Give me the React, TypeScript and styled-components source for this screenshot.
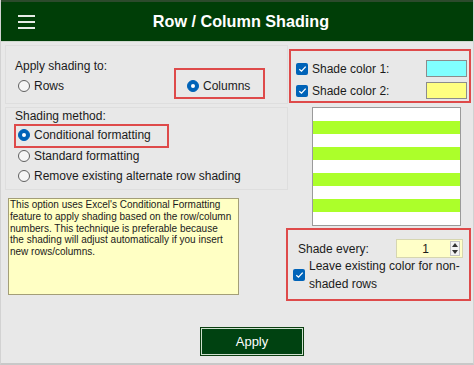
import styled, { createGlobalStyle } from "styled-components";

const GlobalStyle = createGlobalStyle`
  html, body {
    margin: 0;
    padding: 0;
    background: #e8e8e8;
  }
  body {
    font-family: "Liberation Sans", Arial, sans-serif;
    font-size: 12px;
    color: #1b1b1b;
  }
`;

const Page = styled.div`
  width: 474px;
  height: 365px;
  box-sizing: border-box;
  background: #e8e8e8;
  border-left: 1px solid #d2d2d2;
  border-right: 1px solid #d2d2d2;
  border-bottom: 2px solid #c8c8c8;
  overflow: hidden;
`;

const Header = styled.header`
  height: 42px;
  box-sizing: border-box;
  margin: 0 -1px;
  border-top: 2px solid #2c4a2c;
  border-bottom: 1px solid #cfd8cf;
  background: #003e07;
  display: flex;
  align-items: center;
`;

const Burger = styled.button`
  width: 17px;
  height: 14px;
  margin-left: 18px;
  padding: 0;
  border: 0;
  background: transparent;
  display: flex;
  flex-direction: column;
  justify-content: space-between;
  span {
    display: block;
    height: 2px;
    background: #e6ebe6;
  }
`;

const Title = styled.h1`
  flex: 1;
  margin: 0 0 0 -35px;
  padding-left: 8px;
  text-align: center;
  font-size: 16.2px;
  font-weight: bold;
  color: #ffffff;
`;

const Body = styled.main`
  display: flex;
  padding: 3px 0 0 4px;
`;

const LeftCol = styled.div`
  width: 281px;
  display: flex;
  flex-direction: column;
`;

const RightCol = styled.div`
  width: 185px;
  display: flex;
  flex-direction: column;
`;

const Group = styled.fieldset<{ $top: number; $height: number }>`
  margin: 0 0 3px 0;
  padding: ${(p) => p.$top}px 0 0 0;
  width: 283px;
  height: ${(p) => p.$height}px;
  box-sizing: border-box;
  border: 1px solid #dedede;
  min-width: 0;
`;

const Legend = styled.div`
  line-height: 16px;
  padding-left: 9px;
  font-size: 12px;
`;

const RadioRow = styled.div`
  display: flex;
  align-items: flex-start;
  margin-top: -6px;
  padding-left: 12px;
`;

const Highlight = styled.div<{ $pad: string; $width?: number }>`
  border: 2px solid #de4a4a;
  padding: ${(p) => p.$pad};
  width: ${(p) => (p.$width ? `${p.$width}px` : "auto")};
  box-sizing: border-box;
`;

const OptionLabel = styled.label<{ $width?: number; $mt?: number; $indent?: number }>`
  display: flex;
  align-items: center;
  gap: 4px;
  height: 16px;
  width: ${(p) => (p.$width ? `${p.$width}px` : "auto")};
  margin-top: ${(p) => p.$mt ?? 0}px;
  padding-left: ${(p) => p.$indent ?? 0}px;
  font-size: 12px;
  white-space: nowrap;
`;

const RadioDot = styled.span<{ $on?: boolean }>`
  width: 12px;
  height: 12px;
  box-sizing: border-box;
  border-radius: 50%;
  flex: none;
  position: relative;
  background: ${(p) => (p.$on ? "#0063b8" : "#f6f6f6")};
  border: 1px solid ${(p) => (p.$on ? "#0063b8" : "#606060")};
  &::after {
    content: "";
    display: ${(p) => (p.$on ? "block" : "none")};
    position: absolute;
    width: 4px;
    height: 4px;
    left: 3px;
    top: 3px;
    border-radius: 50%;
    background: #ffffff;
  }
`;

const MethodList = styled.div`
  padding-left: 8px;
  display: flex;
  flex-direction: column;
`;

const Info = styled.div`
  margin: 5px 0 0 3px;
  width: 231px;
  height: 97px;
  box-sizing: border-box;
  background: #ffffc4;
  border: 1px solid #a39e78;
  padding: 0 0 0 1px;
  font-size: 10px;
  line-height: 11.8px;
  color: #1a1a1a;
  white-space: nowrap;
`;

const ColorRow = styled.div`
  display: flex;
  align-items: center;
  height: 17px;
  & + & {
    margin-top: 5px;
  }
`;

const CheckBox = styled.span`
  width: 12px;
  height: 12px;
  border-radius: 2px;
  background: #0063b8;
  flex: none;
  display: flex;
  align-items: center;
  justify-content: center;
`;

const RowText = styled.span`
  margin-left: 4px;
  flex: 1;
`;

const Swatch = styled.span<{ $color: string }>`
  width: 41px;
  height: 17px;
  box-sizing: border-box;
  border: 1px solid #8c8c8c;
  background: ${(p) => p.$color};
`;

const Preview = styled.div`
  margin: 4px 0 0 26px;
  width: 149px;
  height: 119px;
  box-sizing: border-box;
  border: 1px solid #9a9a9a;
  display: flex;
  flex-direction: column;
`;

const Stripe = styled.div<{ $on: boolean }>`
  height: 13px;
  background: ${(p) => (p.$on ? "#acff2a" : "#ffffff")};
`;

const EveryRow = styled.div`
  display: flex;
  align-items: center;
  height: 19px;
  padding-left: 8px;
`;

const Spin = styled.div`
  margin-left: auto;
  margin-right: 6px;
  width: 67px;
  height: 19px;
  box-sizing: border-box;
  background: #ffffc8;
  border: 1px solid #d6d6b0;
  display: flex;
  align-items: center;
`;

const SpinValue = styled.span`
  flex: 1;
  text-align: center;
  font-size: 12px;
  padding-left: 4px;
`;

const SpinArrows = styled.span`
  width: 10px;
  height: 15px;
  margin-right: 2px;
  box-sizing: border-box;
  border: 1px solid #c4c4c4;
  background: #f4f4f4;
  display: flex;
  flex-direction: column;
  justify-content: space-around;
  align-items: center;
`;

const LeaveRow = styled.div`
  display: flex;
  align-items: center;
  margin-top: -1px;
  padding-left: 3px;
`;

const LeaveText = styled.span`
  margin-left: 4px;
  font-size: 12px;
  line-height: 18px;
`;

const Footer = styled.div`
  padding: 27px 0 0 200px;
`;

const ApplyButton = styled.button`
  width: 102px;
  height: 27px;
  box-sizing: border-box;
  background: #004211;
  border: 1px solid #cfe0cf;
  outline: 1px solid #0b3f10;
  color: #ffffff;
  font-family: "Liberation Sans", Arial, sans-serif;
  font-size: 13px;
  padding: 0;
`;

const Tick = () => (
  <svg width="9" height="8" viewBox="0 0 9 8">
    <path d="M1.3 4.2 L3.5 6.2 L7.7 1.6" fill="none" stroke="#fff" strokeWidth="1.3" />
  </svg>
);

const stripes = [0, 1, 0, 1, 0, 1, 0, 1, 0];

export default function App() {
  return (
    <>
      <GlobalStyle />
      <Page>
        <Header>
          <Burger aria-label="Menu">
            <span />
            <span />
            <span />
          </Burger>
          <Title>Row / Column Shading</Title>
        </Header>
        <Body>
          <LeftCol>
            <Group $top={12} $height={59}>
              <Legend>Apply shading to:</Legend>
              <RadioRow>
                <OptionLabel $width={156} $mt={10}>
                  <RadioDot />
                  Rows
                </OptionLabel>
                <Highlight $pad="8px 13px 3px 11px">
                  <OptionLabel>
                    <RadioDot $on />
                    Columns
                  </OptionLabel>
                </Highlight>
              </RadioRow>
            </Group>
            <Group $top={0} $height={83}>
              <Legend>Shading method:</Legend>
              <MethodList>
                <Highlight $pad="1px 0 3px 2px" $width={155}>
                  <OptionLabel>
                    <RadioDot $on />
                    Conditional formatting
                  </OptionLabel>
                </Highlight>
                <OptionLabel $indent={4}>
                  <RadioDot />
                  Standard formatting
                </OptionLabel>
                <OptionLabel $mt={4} $indent={4}>
                  <RadioDot />
                  Remove existing alternate row shading
                </OptionLabel>
              </MethodList>
            </Group>
            <Info>
              This option uses Excel's Conditional Formatting
              <br />
              feature to apply shading based on the row/column
              <br />
              numbers. This technique is preferable because
              <br />
              the shading will adjust automatically if you insert
              <br />
              new rows/columns.
            </Info>
          </LeftCol>
          <RightCol>
            <Highlight $pad="9px 2px 2px 5px" $width={182} style={{ marginTop: 4, marginLeft: 3 }}>
              <ColorRow>
                <CheckBox>
                  <Tick />
                </CheckBox>
                <RowText>Shade color 1:</RowText>
                <Swatch $color="#80ffff" />
              </ColorRow>
              <ColorRow>
                <CheckBox>
                  <Tick />
                </CheckBox>
                <RowText>Shade color 2:</RowText>
                <Swatch $color="#ffff80" />
              </ColorRow>
            </Highlight>
            <Preview>
              {stripes.map((s, i) => (
                <Stripe key={i} $on={s === 1} />
              ))}
            </Preview>
            <Highlight $pad="9px 0 0 2px" $width={185} style={{ marginTop: 2, height: 73 }}>
              <EveryRow>
                Shade every:
                <Spin>
                  <SpinValue>1</SpinValue>
                  <SpinArrows>
                    <svg width="6" height="4" viewBox="0 0 6 4">
                      <path d="M0 4 L3 0 L6 4 Z" fill="#333" />
                    </svg>
                    <svg width="6" height="4" viewBox="0 0 6 4">
                      <path d="M0 0 L3 4 L6 0 Z" fill="#333" />
                    </svg>
                  </SpinArrows>
                </Spin>
              </EveryRow>
              <LeaveRow>
                <CheckBox>
                  <Tick />
                </CheckBox>
                <LeaveText>
                  Leave existing color for non-
                  <br />
                  shaded rows
                </LeaveText>
              </LeaveRow>
            </Highlight>
          </RightCol>
        </Body>
        <Footer>
          <ApplyButton>Apply</ApplyButton>
        </Footer>
      </Page>
    </>
  );
}
